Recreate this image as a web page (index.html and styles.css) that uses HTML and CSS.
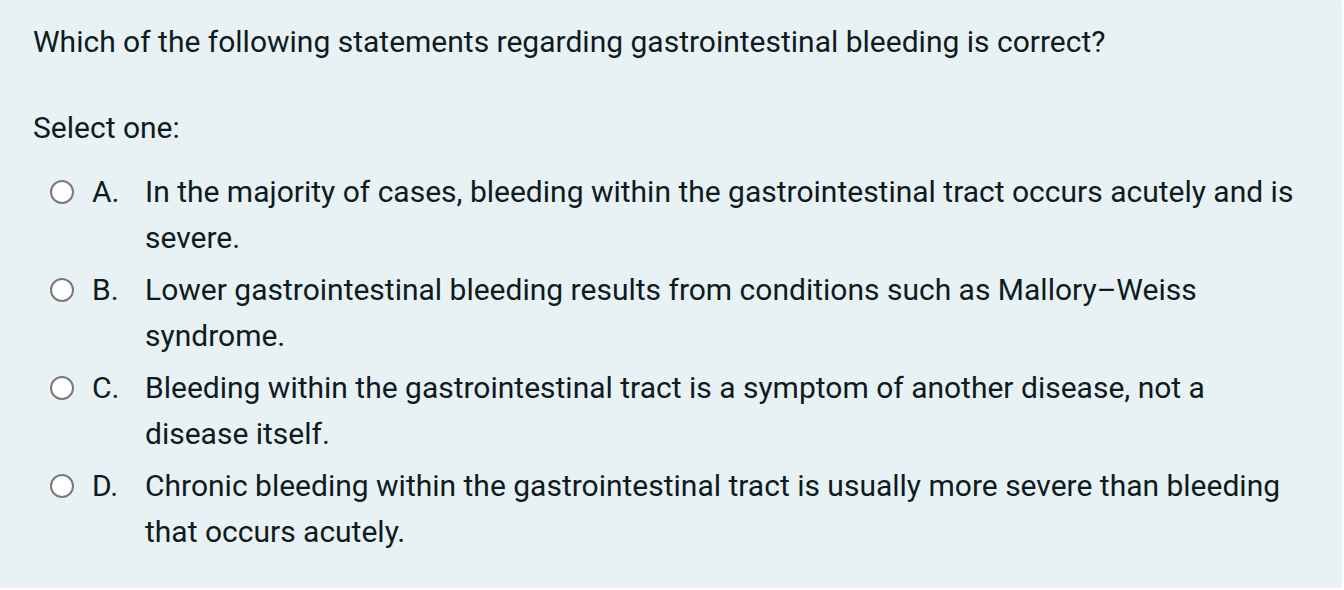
FILE: index.html
```html
<!DOCTYPE html>
<html lang="en">
<head>
<meta charset="utf-8">
<title>Question</title>
<link rel="stylesheet" href="styles.css">
</head>
<body>
<div class="formulation">
  <div class="qtext">Which of the following statements regarding gastrointestinal bleeding is correct?</div>
  <div class="prompt">Select one:</div>
  <div class="answers">
    <div class="option">
      <span class="radio"></span>
      <span class="num">A.</span>
      <span class="text">In the majority of cases, bleeding within the gastrointestinal tract occurs acutely and is severe.</span>
    </div>
    <div class="option">
      <span class="radio"></span>
      <span class="num">B.</span>
      <span class="text">Lower gastrointestinal bleeding results from conditions such as Mallory–Weiss syndrome.</span>
    </div>
    <div class="option">
      <span class="radio"></span>
      <span class="num">C.</span>
      <span class="text">Bleeding within the gastrointestinal tract is a symptom of another disease, not a disease itself.</span>
    </div>
    <div class="option">
      <span class="radio"></span>
      <span class="num">D.</span>
      <span class="text">Chronic bleeding within the gastrointestinal tract is usually more severe than bleeding that occurs acutely.</span>
    </div>
  </div>
</div>
</body>
</html>
```

FILE: styles.css
```css
html, body {
  margin: 0;
  padding: 0;
  background: #ffffff;
}
body {
  font-family: Roboto, "Liberation Sans", sans-serif;
  font-size: 30px;
  color: #0e1b20;
}
.formulation {
  background: #e8f1f4;
  width: 1342px;
  height: 588px;
  box-sizing: border-box;
  padding: 21px 42px 0 33px;
  border-radius: 0 4px 4px 0;
}
.qtext {
  line-height: 42px;
}
.prompt {
  margin-top: 44px;
  line-height: 42px;
}
.answers {
  margin-top: 20px;
  display: flex;
  flex-direction: column;
  gap: 6px;
}
.option {
  display: flex;
  align-items: flex-start;
  line-height: 46px;
  padding-left: 17px;
}
.radio {
  flex: none;
  width: 20px;
  height: 20px;
  border: 2px solid #7a7a7a;
  border-radius: 50%;
  background: #ffffff;
  margin-top: 11px;
  margin-right: 18px;
}
.num {
  flex: none;
  width: 53px;
}
.text {
  flex: 1;
}
```
